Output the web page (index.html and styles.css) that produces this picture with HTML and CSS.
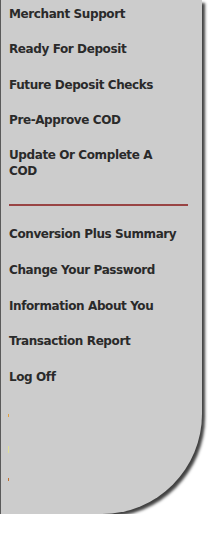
FILE: index.html
```html
<!DOCTYPE html>
<html lang="en">
<head>
    <meta charset="UTF-8">
    <meta name="viewport" content="width=device-width, initial-scale=1.0">
    <title>Merchant Menu</title>
    <link rel="stylesheet" href="styles.css">
</head>
<body>
    <div class="sidebar">
        <ul class="menu">
            <li><a href="#">Merchant Support</a></li>
            <li><a href="#">Ready For Deposit</a></li>
            <li><a href="#">Future Deposit Checks</a></li>
            <li><a href="#">Pre-Approve COD</a></li>
            <li class="wrap"><a href="#">Update Or Complete A COD</a></li>
        </ul>
        <hr class="divider">
        <ul class="menu menu-lower">
            <li><a href="#">Conversion Plus Summary</a></li>
            <li><a href="#">Change Your Password</a></li>
            <li><a href="#">Information About You</a></li>
            <li><a href="#">Transaction Report</a></li>
            <li><a href="#">Log Off</a></li>
        </ul>
        <div class="spacers">
            <span class="spacer orange"></span>
            <span class="spacer yellow"></span>
            <span class="spacer brown"></span>
        </div>
    </div>
</body>
</html>
```

FILE: styles.css
```css
body {
    margin: 0;
    background-color: #ffffff;
    font-family: "DejaVu Sans", Verdana, sans-serif;
}
.sidebar {
    width: 202px;
    height: 514px;
    box-sizing: border-box;
    background-color: #cccccc;
    border-left: 1px solid #5a5a5a;
    border-bottom-right-radius: 100px;
    box-shadow: 3px 3px 3px rgba(0, 0, 0, 0.75);
    padding-top: 6px;
}
.menu {
    list-style: none;
    margin: 0;
    padding: 0 0 0 8px;
    width: 190px;
}
.menu li {
    margin-bottom: 19.25px;
    font-size: 12px;
    font-weight: bold;
    line-height: 16px;
    letter-spacing: -0.4px;
}
.menu li:last-child {
    margin-bottom: 0;
}
.menu .wrap {
    width: 160px;
}
.menu-lower li {
    margin-bottom: 19.75px;
}
.menu a {
    color: #2a2a2a;
    text-decoration: none;
}
.divider {
    border: none;
    height: 2px;
    background-color: #994444;
    margin: 25px 0 20px 8px;
    width: 179px;
}
.spacers {
    padding-left: 7px;
    margin-top: 29px;
}
.spacer {
    display: block;
    width: 1px;
}
.orange {
    height: 3px;
    background-color: #e0a040;
}
.yellow {
    height: 7px;
    margin-top: 29px;
    background-color: #dede9a;
}
.brown {
    height: 3px;
    margin-top: 25px;
    background-color: #c07030;
}
```
